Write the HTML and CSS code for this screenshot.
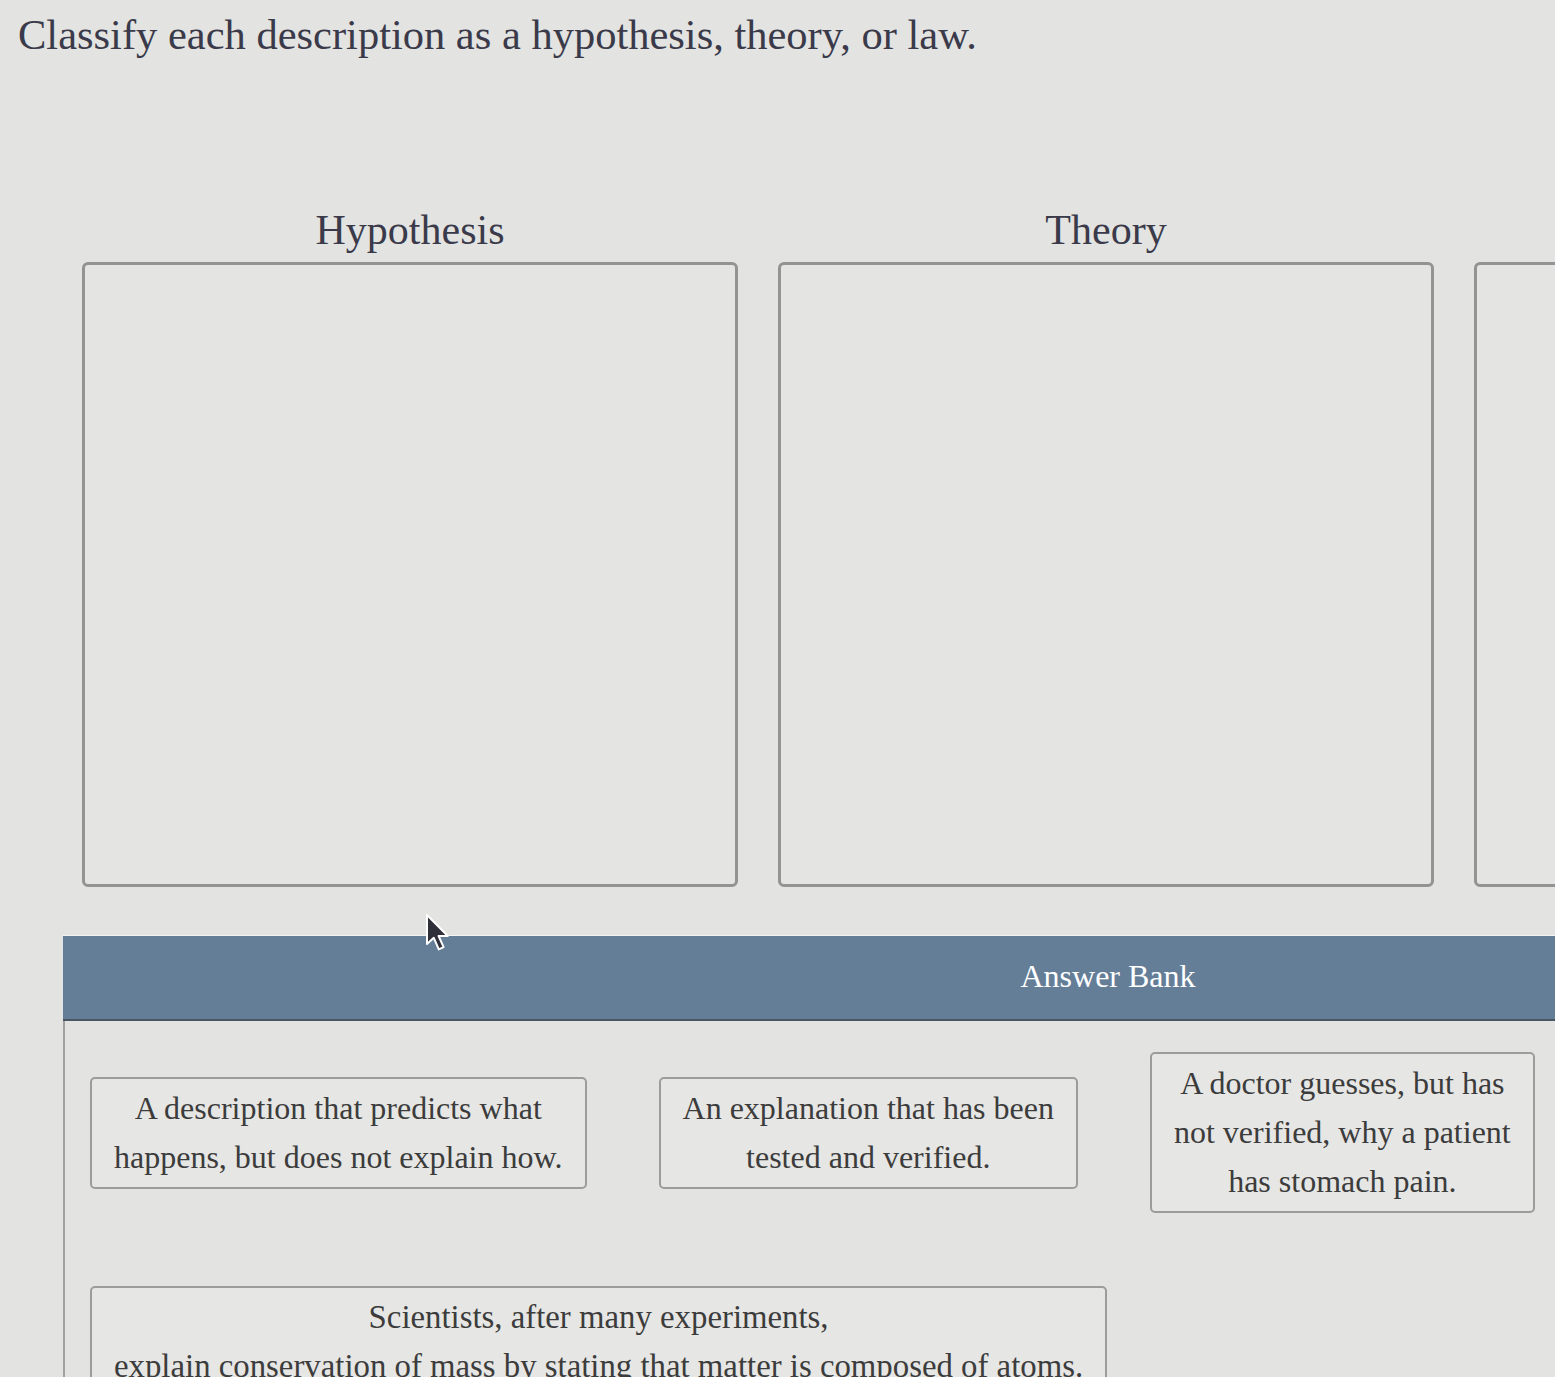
FILE: index.html
```html
<!DOCTYPE html>
<html>
<head>
<meta charset="utf-8">
<link rel="stylesheet" href="styles.css">
</head>
<body>
<div class="page">
  <h1 class="prompt">Classify each description as a hypothesis, theory, or law.</h1>
  <div class="bins">
    <div class="bin">
      <div class="bin-label">Hypothesis</div>
      <div class="bin-box"></div>
    </div>
    <div class="bin">
      <div class="bin-label">Theory</div>
      <div class="bin-box"></div>
    </div>
    <div class="bin">
      <div class="bin-label">Law</div>
      <div class="bin-box"></div>
    </div>
  </div>
  <div class="bank">
    <div class="bank-head">Answer Bank</div>
    <div class="bank-body">
      <div class="card">A description that predicts what<br>happens, but does not explain how.</div>
      <div class="card">An explanation that has been<br>tested and verified.</div>
      <div class="card">A doctor guesses, but has<br>not verified, why a patient<br>has stomach pain.</div>
      <div class="card">Scientists, after many experiments,<br>explain conservation of mass by stating that matter is composed of atoms.</div>
    </div>
  </div>
  <svg class="cursor" width="26" height="40" viewBox="0 0 13 20">
    <path d="M1 1 L1 15.5 L4.4 12.4 L6.9 18.2 L9.3 17.1 L6.8 11.5 L11.4 11.5 Z" fill="#2f2f3a" stroke="#ffffff" stroke-width="1" stroke-linejoin="round"/>
  </svg>
</div>
</body>
</html>
```
FILE: styles.css
```css
html, body {
  margin: 0;
  padding: 0;
  background: #e3e3e1;
  overflow: hidden;
}
.page {
  position: relative;
  width: 2200px;
  height: 1377px;
  font-family: "Liberation Serif", "Times New Roman", serif;
}
.prompt {
  margin: 0;
  padding: 10px 0 0 18px;
  font-size: 42.5px;
  line-height: 50px;
  font-weight: normal;
  color: #3a3a4a;
}
.bins {
  display: flex;
  gap: 40px;
  margin: 145px 0 0 82px;
}
.bin {
  width: 656px;
  display: flex;
  flex-direction: column;
}
.bin-label {
  text-align: center;
  font-size: 42px;
  line-height: 50px;
  color: #3a3a4a;
  margin-bottom: 7px;
}
.bin-box {
  height: 619px;
  border: 3px solid #939393;
  border-radius: 6px;
  background: #e4e4e2;
}
.bank {
  margin: 48px 0 0 63px;
  width: 2090px;
}
.bank-head {
  height: 83px;
  line-height: 80px;
  background: #647e98;
  border-top: 1px solid #f4f4f4;
  border-bottom: 2px solid #4a5663;
  color: #ffffff;
  text-align: center;
  font-size: 32px;
}
.bank-body {
  display: flex;
  flex-wrap: wrap;
  align-items: center;
  align-content: flex-start;
  gap: 73px 72px;
  padding: 31px 0 40px 25px;
  border-left: 2px solid #a0a0a0;
  border-right: 2px solid #a0a0a0;
  min-height: 400px;
}
.card {
  padding: 5px 22px;
  border: 2px solid #9c9c9c;
  border-radius: 5px;
  background: #e6e6e4;
  color: #3c3c3c;
  font-size: 32px;
  line-height: 49px;
  text-align: center;
  white-space: nowrap;
}
.card:last-child {
  font-size: 32.8px;
}
.cursor {
  position: absolute;
  left: 425px;
  top: 913px;
}
```
